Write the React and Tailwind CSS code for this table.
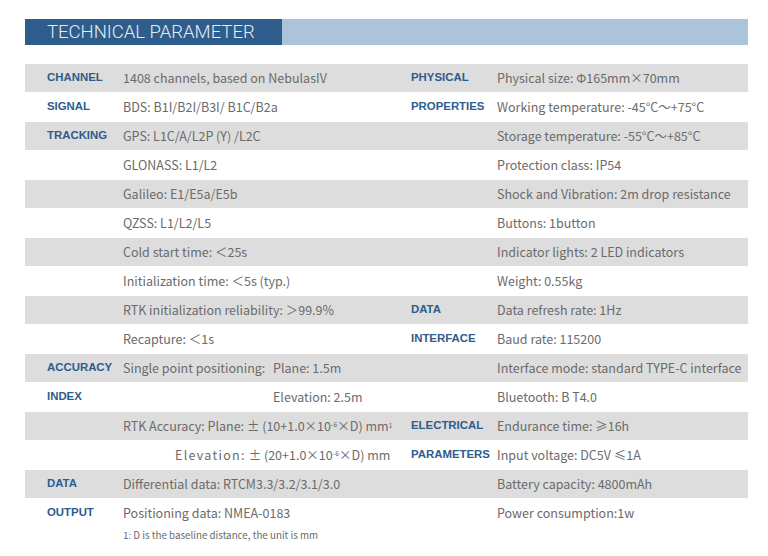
import React from "react";

const L = [
  { label: "CHANNEL", value: "1408 channels, based on NebulasIV" },
  { label: "SIGNAL", value: "BDS: B1I/B2I/B3I/ B1C/B2a" },
  { label: "TRACKING", value: "GPS: L1C/A/L2P (Y) /L2C" },
  { label: "", value: "GLONASS: L1/L2" },
  { label: "", value: "Galileo: E1/E5a/E5b" },
  { label: "", value: "QZSS: L1/L2/L5" },
  { label: "", value: "Cold start time: ＜25s" },
  { label: "", value: "Initialization time: ＜5s (typ.)" },
  { label: "", value: "RTK initialization reliability: ＞99.9%" },
  { label: "", value: "Recapture: ＜1s" },
  { label: "ACCURACY", value: "spp" },
  { label: "INDEX", value: "elev1" },
  { label: "", value: "rtk" },
  { label: "", value: "elev2" },
  { label: "DATA", value: "Differential data: RTCM3.3/3.2/3.1/3.0" },
  { label: "OUTPUT", value: "Positioning data: NMEA-0183" },
];

const R = [
  { label: "PHYSICAL", value: "Physical size: Φ165mm×70mm" },
  { label: "PROPERTIES", value: "Working temperature: -45°C～+75°C" },
  { label: "", value: "Storage temperature: -55°C～+85°C" },
  { label: "", value: "Protection class: IP54" },
  { label: "", value: "Shock and Vibration: 2m drop resistance" },
  { label: "", value: "Buttons: 1button" },
  { label: "", value: "Indicator lights: 2 LED indicators" },
  { label: "", value: "Weight: 0.55kg" },
  { label: "DATA", value: "Data refresh rate: 1Hz" },
  { label: "INTERFACE", value: "Baud rate: 115200" },
  { label: "", value: "Interface mode: standard TYPE-C interface" },
  { label: "", value: "Bluetooth: B T4.0" },
  { label: "ELECTRICAL", value: "Endurance time: ≥16h" },
  { label: "PARAMETERS", value: "Input voltage: DC5V ≤1A" },
  { label: "", value: "Battery capacity: 4800mAh" },
  { label: "", value: "Power consumption:1w" },
];

function LeftValue({ v }) {
  if (v === "spp")
    return (
      <span className="flex whitespace-nowrap">
        <span className="w-[150px] shrink-0">Single point positioning:</span>
        <span>Plane: 1.5m</span>
      </span>
    );
  if (v === "elev1")
    return (
      <span className="flex whitespace-nowrap">
        <span className="w-[150px] shrink-0"></span>
        <span>Elevation: 2.5m</span>
      </span>
    );
  if (v === "rtk")
    return (
      <span className="whitespace-nowrap">
        RTK Accuracy: Plane: ± (10+1.0×10<sup className="text-[7px]">-6</sup>×D) mm
        <sup className="text-[7px] relative -top-[3px]">1</sup>
      </span>
    );
  if (v === "elev2")
    return (
      <span className="whitespace-nowrap pl-[52px]">
        <span className="tracking-[1.3px]">Elevation:</span> ± (20+1.0×10
        <sup className="text-[7px]">-6</sup>×D) mm
      </span>
    );
  return <span className="whitespace-nowrap">{v}</span>;
}

export default function App() {
  const font = { fontFamily: '"Noto Sans CJK SC", "Noto Sans", sans-serif' };
  const lab = { fontFamily: '"Liberation Sans", Arial, sans-serif' };
  return (
    <div className="w-[768px] h-[556px] bg-white pl-[25px] pt-[19px] overflow-hidden">
      <div className="flex w-[723px] h-[26px]">
        <div
          className="w-[257px] bg-[#2f5d8b] text-[#e4ecf4] text-[18.5px] font-light leading-[26px] pl-[22px] whitespace-nowrap"
          style={{ fontFamily: "Roboto, sans-serif" }}
        >
          TECHNICAL PARAMETER
        </div>
        <div className="flex-1 bg-[#abc4da]"></div>
      </div>
      <div className="mt-[19px] w-[723px]">
        {L.map((l, i) => {
          const r = R[i];
          const grey = i % 2 === 0;
          return (
            <div
              key={i}
              className={`flex items-center ${grey ? "h-[28px] bg-[#dddddd]" : "h-[30px] bg-white"}`}
            >
              <div className="w-[365px] shrink-0 flex items-center pl-[22px]">
                <div
                  className="w-[76px] shrink-0 text-[11.4px] font-bold text-[#2e5c8c] whitespace-nowrap"
                  style={lab}
                >
                  {l.label}
                </div>
                <div className="text-[12.5px] text-[#6b6b6b]" style={font}>
                  <LeftValue v={l.value} />
                </div>
              </div>
              <div className="flex-1 flex items-center pl-[21px]">
                <div
                  className="w-[86px] shrink-0 text-[11.4px] font-bold text-[#2e5c8c] whitespace-nowrap"
                  style={lab}
                >
                  {r.label}
                </div>
                <div className="text-[12.5px] text-[#6b6b6b] whitespace-nowrap" style={font}>
                  {r.value}
                </div>
              </div>
            </div>
          );
        })}
        <div className="pl-[98px] text-[9.8px] text-[#6b6b6b] leading-[14px]" style={font}>
          1: D is the baseline distance, the unit is mm
        </div>
      </div>
    </div>
  );
}
